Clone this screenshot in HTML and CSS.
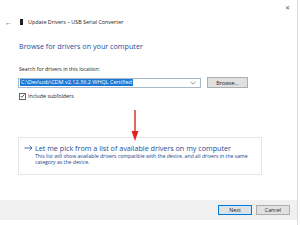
FILE: index.html
```html
<!DOCTYPE html>
<html>
<head>
<meta charset="utf-8">
<link rel="stylesheet" href="styles.css">
</head>
<body>
<div class="window">
  <div class="topbar"><span class="close">✕</span></div>
  <div class="titlerow">
    <span class="back">←</span>
    <span class="devicon"></span>
    <span class="title">Update Drivers – USB Serial Converter</span>
  </div>
  <div class="content">
    <div class="heading">Browse for drivers on your computer</div>
    <div class="label">Search for drivers in this location:</div>
    <div class="pathrow">
      <div class="combo">
        <span class="sel">C:\Dev\usb\CDM v2.12.36.2 WHQL Certified</span>
        <svg class="chev" width="6" height="4" viewBox="0 0 6 4"><path d="M0.5 0.8 L3 3.2 L5.5 0.8" fill="none" stroke="#666" stroke-width="0.7"/></svg>
      </div>
      <div class="btn browse">Browse...</div>
    </div>
    <div class="checkrow">
      <span class="check"><svg width="6" height="6" viewBox="0 0 6 6"><path d="M0.8 3 L2.3 4.6 L5.2 1.2" fill="none" stroke="#222" stroke-width="0.9"/></svg></span>
      <span class="checklabel">Include subfolders</span>
    </div>
    <div class="cmdlink">
      <div class="cmdtitle"><svg class="cmdarrow" width="9" height="6" viewBox="0 0 9 6"><path d="M0.5 3 H8 M5.5 0.6 L8 3 L5.5 5.4" fill="none" stroke="#1f4c9a" stroke-width="0.8"/></svg><span>Let me pick from a list of available drivers on my computer</span></div>
      <div class="cmddesc">This list will show available drivers compatible with the device, and all drivers in the same category as the device.</div>
    </div>
  </div>
  <div class="footer">
    <div class="btn next">Next</div>
    <div class="btn cancel">Cancel</div>
  </div>
  <svg class="redarrow" width="10" height="32" viewBox="0 0 10 32"><path d="M5 0 V24" stroke="#e3211f" stroke-width="1.4"/><path d="M1.5 21 L5 31 L8.5 21 Z" fill="#e3211f"/></svg>
</div>
</body>
</html>
```
FILE: styles.css
```css
* { box-sizing: border-box; }
html, body { margin: 0; padding: 0; background: #fff; }
body { width: 300px; height: 225px; overflow: hidden; font-family: "Open Sans", "Noto Sans", sans-serif; color: #1a1a1a; }
.window { position: relative; width: 298px; height: 225px; border-right: 1px solid #dcdcdc; }
.topbar { height: 15px; display: flex; justify-content: flex-end; align-items: center; padding-right: 7px; }
.close { font-size: 6px; color: #555; }
.titlerow { height: 14px; display: flex; align-items: center; padding-left: 5px; }
.back { font-size: 7px; color: #444; width: 15px; }
.devicon { width: 3px; height: 6px; background: #222; margin-right: 5px; }
.title { font-size: 5.4px; color: #222; }
.content { padding-left: 19px; }
.heading { margin-top: 11px; font-size: 7.2px; color: #1f4c9a; line-height: 12px; }
.label { margin-top: 14px; font-size: 5.2px; line-height: 7px; }
.pathrow { display: flex; align-items: center; margin-top: 4px; margin-left: -1px; }
.combo { width: 183px; height: 10px; border: 1px solid #a9b8c8; display: flex; align-items: center; justify-content: space-between; padding: 0 4px 0 1px; }
.sel { background: #1c78d4; color: #fff; font-size: 5.5px; line-height: 7px; padding: 0 1px; }
.chev { display: block; }
.btn { display: flex; align-items: center; justify-content: center; font-size: 5.3px; background: #e1e1e1; border: 1px solid #adadad; color: #222; }
.browse { width: 41px; height: 11px; margin-left: 6px; }
.checkrow { display: flex; align-items: center; margin-top: 4.5px; }
.check { width: 7px; height: 7px; border: 1px solid #666; display: flex; align-items: center; justify-content: center; margin-right: 2px; }
.check svg { display: block; }
.checklabel { font-size: 5.3px; line-height: 7px; }
.cmdlink { margin-top: 37px; margin-left: -1px; width: 244px; height: 38px; border: 1px solid #e6e6e6; padding: 5px 0 0 5px; }
.cmdtitle { display: flex; align-items: center; font-size: 7.2px; color: #1f4c9a; line-height: 10px; }
.cmdarrow { display: block; margin-right: 2px; }
.cmddesc { padding-left: 11px; padding-right: 8px; font-size: 5.15px; line-height: 6.5px; color: #223f86; }
.footer { position: absolute; left: 0; right: 0; top: 200px; height: 20px; background: #f0f0f0; display: flex; justify-content: flex-end; align-items: center; gap: 4px; padding-right: 7px; }
.next { width: 34px; height: 10px; border: 1px solid #0078d7; box-shadow: inset 0 0 0 1px #cfe5f7; }
.cancel { width: 34px; height: 10px; }
.redarrow { position: absolute; left: 130px; top: 110px; }
```
